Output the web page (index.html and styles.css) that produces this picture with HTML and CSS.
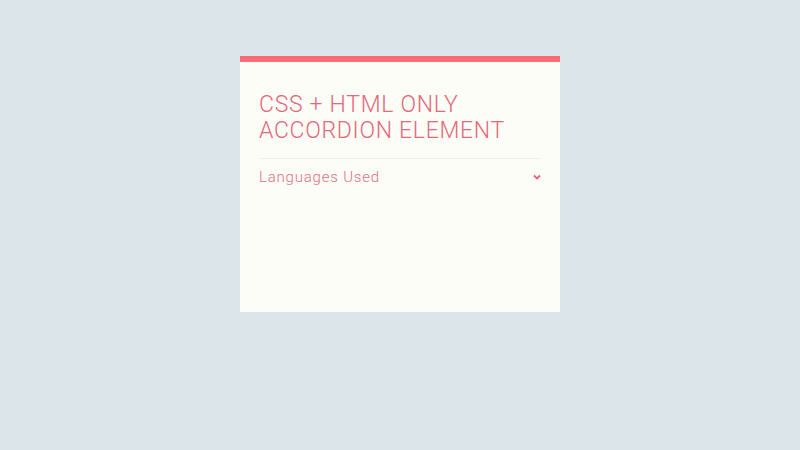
FILE: index.html
```html
<!DOCTYPE html>
<html lang="en">
  <head>
    <meta charset="UTF-8" />
    <meta name="viewport" content="width=device-width, initial-scale=1" />
    <title>Accordion</title>
    <link rel="stylesheet" href="styles.css">
  </head>
  <body>
    <div class="card">
      <h1 class="title">CSS + HTML only<br>Accordion Element</h1>
      <ul class="accordion">
        <li class="item">
          <span class="label">Languages Used</span>
          <svg class="chevron" width="8" height="6" viewBox="0 0 8 6">
            <path d="M1 1.5 L4 4.5 L7 1.5" fill="none" stroke="#e5607a" stroke-width="1.8" />
          </svg>
        </li>
      </ul>
    </div>
  </body>
</html>
```

FILE: styles.css
```css
body {
  margin: 0;
  background: #dce5ea;
  font-family: Roboto, "Liberation Sans", sans-serif;
}
.card {
  width: 320px;
  height: 256px;
  margin: 56px auto 0;
  padding: 30px 19px 0;
  box-sizing: border-box;
  background: #fdfdf8;
  border-top: 6px solid #f76b75;
}
.title {
  margin: 0;
  font-size: 23px;
  font-weight: 300;
  line-height: 26px;
  letter-spacing: 0.7px;
  text-transform: uppercase;
  color: #e3697a;
  padding-bottom: 14px;
  border-bottom: 1px solid #f0eeea;
}
.accordion {
  list-style: none;
  margin: 0;
  padding: 0;
}
.item {
  display: flex;
  justify-content: space-between;
  align-items: center;
  padding: 9px 0;
}
.label {
  font-size: 15px;
  font-weight: 300;
  letter-spacing: 0.8px;
  color: #e0707e;
}
```
